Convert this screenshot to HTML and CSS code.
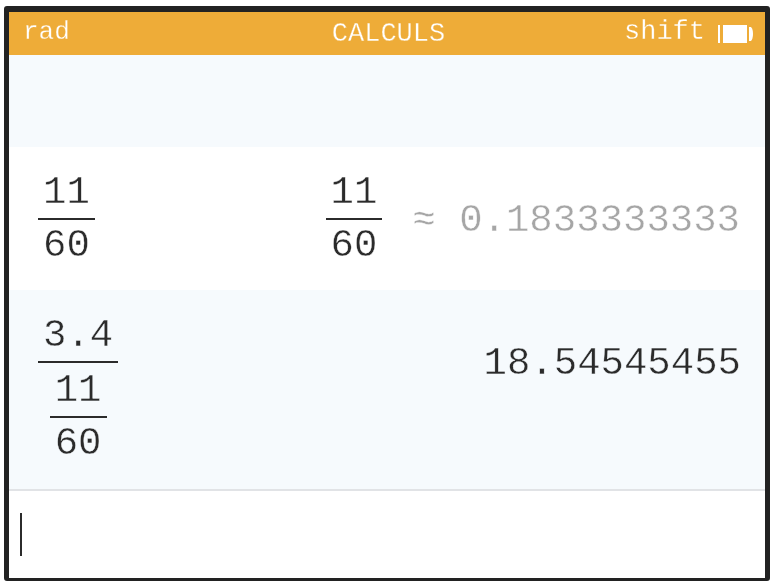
FILE: index.html
```html
<!DOCTYPE html>
<html lang="fr">
<head>
  <meta charset="UTF-8">
  <title>Calculs</title>
  <link rel="stylesheet" href="styles.css">
</head>
<body>
  <div class="screen">
    <div class="top-bar">
      <span class="top-side">rad</span>
      <span class="top-title">CALCULS</span>
      <span class="top-side top-right">
        shift
        <svg class="battery" width="37" height="20" viewBox="0 0 37 20">
          <rect x="1" y="1" width="2" height="18" fill="#fff"/>
          <rect x="6" y="1" width="24" height="18" fill="#fff"/>
          <path d="M32 3h2q2 2 2 7t-2 7h-2z" fill="#fff"/>
        </svg>
      </span>
    </div>

    <div class="history">
      <div class="row row-empty"></div>

      <div class="row row-one">
        <div class="frac">
          <span class="num">11</span>
          <span class="den">60</span>
        </div>
        <div class="result">
          <div class="frac">
            <span class="num">11</span>
            <span class="den">60</span>
          </div>
          <span class="approx">≈ 0.1833333333</span>
        </div>
      </div>

      <div class="row row-two">
        <div class="frac frac-tall">
          <span class="num">3.4</span>
          <div class="den den-outer">
            <div class="frac">
              <span class="num">11</span>
              <span class="den">60</span>
            </div>
          </div>
        </div>
        <div class="result">
          <span>18.54545455</span>
        </div>
      </div>
    </div>

    <div class="input-line">
      <span class="cursor"></span>
    </div>
  </div>
</body>
</html>
```

FILE: styles.css
```css
html, body {
  margin: 0;
  height: 100%;
  background: #fff;
}

body {
  padding: 6px 2px 5px 4px;
  box-sizing: border-box;
  font-family: "Liberation Mono", monospace;
}

.screen {
  height: 100%;
  box-sizing: border-box;
  display: flex;
  flex-direction: column;
  border: solid #222;
  border-width: 6px 5px 3px 5px;
  border-radius: 3px;
  background: #fff;
  color: #2b2b2b;
  font-size: 39px;
  filter: blur(0.4px);
}

.top-bar {
  height: 43px;
  flex: none;
  display: grid;
  grid-template-columns: 1fr auto 1fr;
  align-items: center;
  padding: 0 11px 0 14px;
  background: #eeac38;
  color: #fff;
  font-size: 26px;
  -webkit-text-stroke: 0.3px #eeac38;
}

.top-side {
  margin-top: -3px;
}

.top-title {
  font-size: 27px;
}

.top-right {
  display: flex;
  justify-content: flex-end;
  align-items: center;
  gap: 12px;
  font-size: 27px;
}

.battery {
  margin-top: 3px;
}

.history {
  flex: none;
}

.row {
  display: flex;
  justify-content: space-between;
  align-items: center;
  padding: 0 24px 0 29px;
  background: #f6fafd;
  -webkit-text-stroke: 0.4px #f6fafd;
}

.row-empty {
  height: 92px;
}

.row-one {
  height: 143px;
  background: #fff;
  -webkit-text-stroke: 0.4px #fff;
}

.row-one .frac {
  margin-top: 2px;
}

.row-two {
  height: 199px;
}

.row-two .result {
  margin-bottom: 51px;
}

.frac-tall {
  margin-top: 2px;
}

.result {
  display: flex;
  align-items: center;
  gap: 30px;
}

.approx {
  padding-right: 1px;
  padding-top: 4px;
  color: #a6a6a6;
}

.frac {
  display: inline-flex;
  flex-direction: column;
  align-items: center;
}

.num {
  padding: 0 5px 6px;
  line-height: 37px;
}

.den {
  align-self: stretch;
  display: flex;
  justify-content: center;
  border-top: 2px solid #2b2b2b;
  padding: 8px 5px 0;
  line-height: 37px;
}

.row-two .den-outer {
  padding-top: 10px;
}

.input-line {
  flex: 1;
  display: flex;
  align-items: center;
  padding-left: 11px;
  border-top: 2px solid #e1e3e6;
}

.cursor {
  width: 2px;
  height: 43px;
  background: #2b2b2b;
}
```
